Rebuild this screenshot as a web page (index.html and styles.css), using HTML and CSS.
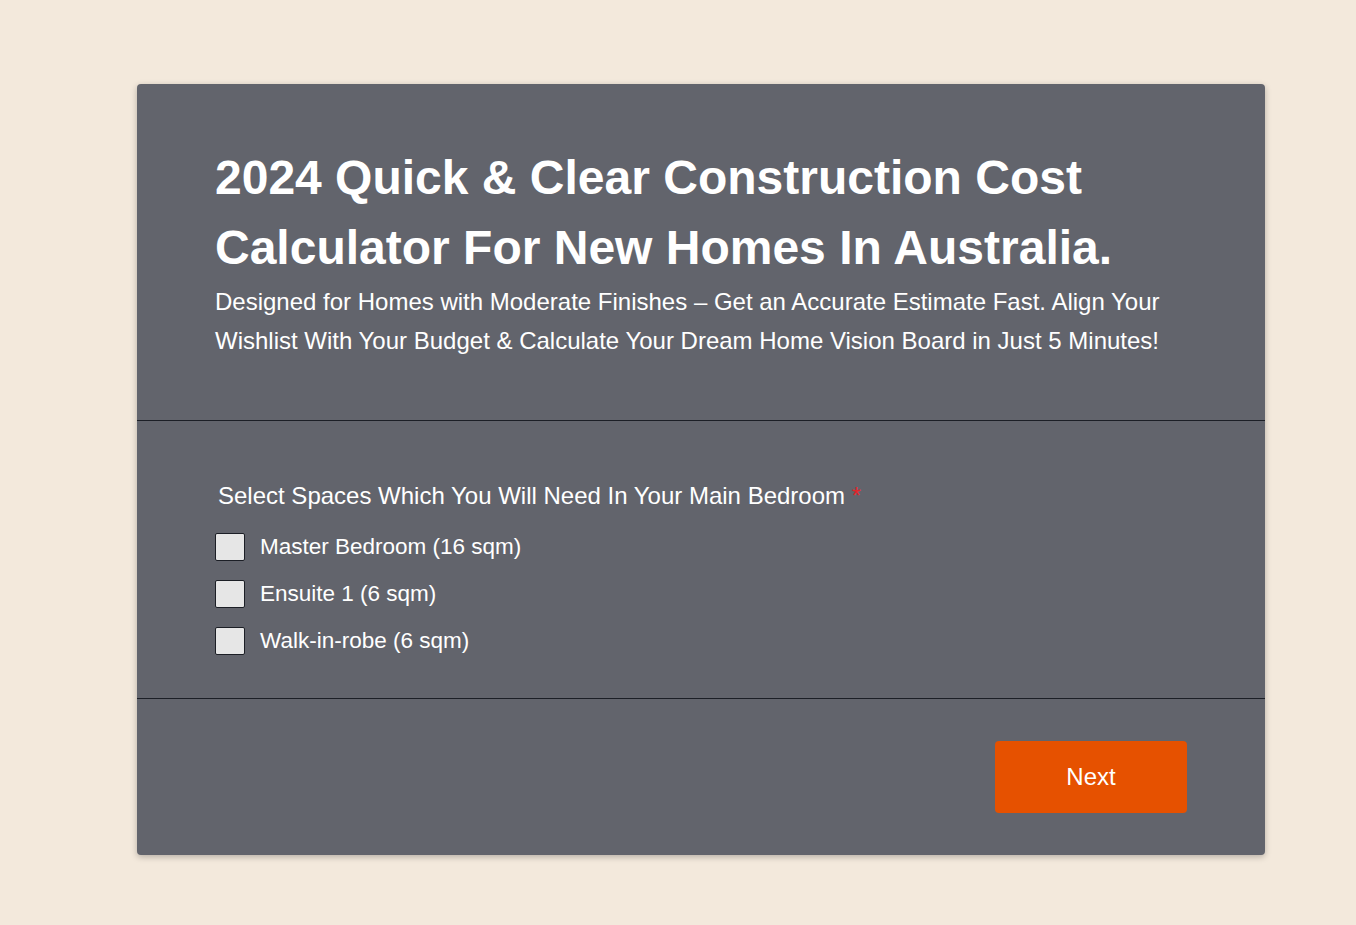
FILE: index.html
```html
<!DOCTYPE html>
<html>
<head>
	<title>Construction Cost Calculator</title>
	<link rel="stylesheet" href="styles.css">
</head>
<body>

	<main class="card">

		<header class="card-head">
			<h1>2024 Quick &amp; Clear Construction Cost Calculator For New Homes In Australia.</h1>
			<p>Designed for Homes with Moderate Finishes – Get an Accurate Estimate Fast. Align Your Wishlist With Your Budget &amp; Calculate Your Dream Home Vision Board in Just 5 Minutes!</p>
		</header>

		<section class="card-body">
			<div class="question">Select Spaces Which You Will Need In Your Main Bedroom <span class="req">*</span></div>
			<label class="option"><input type="checkbox"><span class="box"></span>Master Bedroom (16 sqm)</label>
			<label class="option"><input type="checkbox"><span class="box"></span>Ensuite 1 (6 sqm)</label>
			<label class="option"><input type="checkbox"><span class="box"></span>Walk-in-robe (6 sqm)</label>
		</section>

		<footer class="card-foot">
			<button class="next">Next</button>
		</footer>

	</main>

</body>
</html>
```

FILE: styles.css
```css
body {
	margin: 0;
	padding: 84px 91px 70px 137px;
	background-color: #f3e9dc;
	font-family: 'Liberation Sans', Arial, sans-serif;
	color: white;
}

.card {
	background-color: #62646c;
	border-radius: 4px;
	box-shadow: 0 2px 6px rgba(0, 0, 0, .25);
}

.card-head {
	padding: 59px 78px 60px 78px;
	border-bottom: 1px solid #1c1f26;
}

.card-head h1 {
	margin: 0;
	font-size: 48px;
	line-height: 70px;
	font-weight: bold;
}

.card-head p {
	margin: -1px 0 0;
	font-size: 24px;
	line-height: 39px;
}

.card-body {
	padding: 60px 78px 34px 78px;
	border-bottom: 1px solid #1c1f26;
}

.question {
	margin: 0 0 12px 3px;
	font-size: 24px;
	line-height: 30px;
}

.question .req {
	color: #e2252b;
}

.option {
	display: flex;
	align-items: center;
	gap: 15px;
	height: 47px;
	font-size: 22.5px;
	cursor: pointer;
}

.option input {
	display: none;
}

.option .box {
	width: 28px;
	height: 26px;
	background-color: #e6e6e6;
	border: 1px solid #1c1f26;
	border-radius: 2px;
}

.card-foot {
	display: flex;
	justify-content: flex-end;
	padding: 42px 78px 42px 78px;
}

.next {
	width: 192px;
	height: 72px;
	border: 0;
	border-radius: 4px;
	background-color: #e65100;
	color: white;
	font-family: inherit;
	font-size: 24px;
	cursor: pointer;
}
```
